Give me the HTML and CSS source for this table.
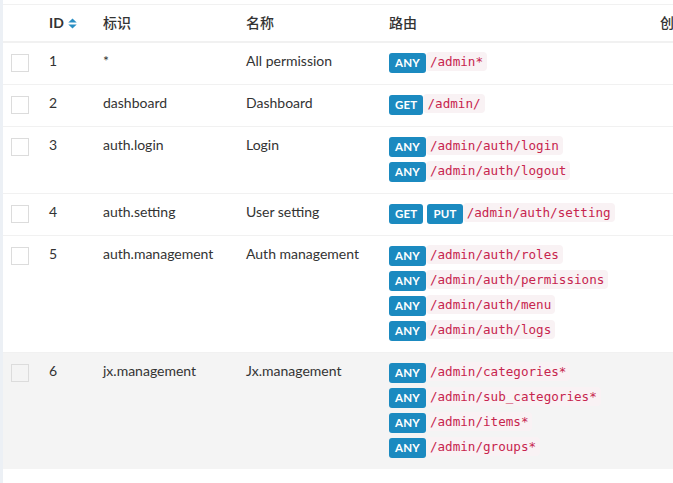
FILE: index.html
```html
<!DOCTYPE html>
<html lang="zh">
<head>
<meta charset="utf-8">
<title>权限</title>
<link rel="stylesheet" href="styles.css">
</head>
<body>
<div class="page">
  <table class="grid">
    <colgroup>
      <col class="c-check"><col class="c-id"><col class="c-slug"><col class="c-name"><col class="c-path"><col class="c-date">
    </colgroup>
    <thead>
      <tr>
        <th></th>
        <th><span class="id-head">ID</span><svg class="sort" width="9" height="11" viewBox="0 0 9 11"><path d="M4.5 0.5 L8.7 4.6 L0.3 4.6 Z" fill="#2a8fc4"/><path d="M4.5 10.5 L8.7 6.4 L0.3 6.4 Z" fill="#2a8fc4"/></svg></th>
        <th>标识</th>
        <th>名称</th>
        <th>路由</th>
        <th>创建时间</th>
      </tr>
    </thead>
    <tbody>
      <tr>
        <td><span class="box"></span></td>
        <td>1</td>
        <td>*</td>
        <td>All permission</td>
        <td><div class="route"><span class="label">ANY</span><code>/admin*</code></div></td>
        <td></td>
      </tr>
      <tr>
        <td><span class="box"></span></td>
        <td>2</td>
        <td>dashboard</td>
        <td>Dashboard</td>
        <td><div class="route"><span class="label">GET</span><code>/admin/</code></div></td>
        <td></td>
      </tr>
      <tr>
        <td><span class="box"></span></td>
        <td>3</td>
        <td>auth.login</td>
        <td>Login</td>
        <td>
          <div class="route"><span class="label">ANY</span><code>/admin/auth/login</code></div>
          <div class="route"><span class="label">ANY</span><code>/admin/auth/logout</code></div>
        </td>
        <td></td>
      </tr>
      <tr>
        <td><span class="box"></span></td>
        <td>4</td>
        <td>auth.setting</td>
        <td>User setting</td>
        <td><div class="route"><span class="label">GET</span><span class="label">PUT</span><code>/admin/auth/setting</code></div></td>
        <td></td>
      </tr>
      <tr>
        <td><span class="box"></span></td>
        <td>5</td>
        <td>auth.management</td>
        <td>Auth management</td>
        <td>
          <div class="route"><span class="label">ANY</span><code>/admin/auth/roles</code></div>
          <div class="route"><span class="label">ANY</span><code>/admin/auth/permissions</code></div>
          <div class="route"><span class="label">ANY</span><code>/admin/auth/menu</code></div>
          <div class="route"><span class="label">ANY</span><code>/admin/auth/logs</code></div>
        </td>
        <td></td>
      </tr>
      <tr class="hover">
        <td><span class="box"></span></td>
        <td>6</td>
        <td>jx.management</td>
        <td>Jx.management</td>
        <td>
          <div class="route"><span class="label">ANY</span><code>/admin/categories*</code></div>
          <div class="route"><span class="label">ANY</span><code>/admin/sub_categories*</code></div>
          <div class="route"><span class="label">ANY</span><code>/admin/items*</code></div>
          <div class="route"><span class="label">ANY</span><code>/admin/groups*</code></div>
        </td>
        <td></td>
      </tr>
    </tbody>
  </table>
</div>
</body>
</html>
```

FILE: styles.css
```css
html, body {
  margin: 0;
  padding: 0;
  background: #ffffff;
  overflow: hidden;
}
body {
  font-family: Lato, "Noto Sans CJK SC", sans-serif;
  font-size: 14px;
  color: #333333;
}
.page {
  border-left: 3px solid #ecf0f5;
  padding-top: 4px;
  min-height: 483px;
  box-sizing: border-box;
  overflow: hidden;
}
.grid {
  border-collapse: collapse;
  table-layout: fixed;
  width: 900px;
  border-top: 1px solid #f1f1f1;
}
.c-check { width: 38px; }
.c-id { width: 54px; }
.c-slug { width: 143px; }
.c-name { width: 143px; }
.c-path { width: 271px; }
.c-date { width: 251px; }
.grid th {
  text-align: left;
  font-weight: 500;
  padding: 8px;
  line-height: 20px;
  border-bottom: 2px solid #f1f1f1;
  white-space: nowrap;
}
.id-head {
  font-weight: 700;
}
.sort {
  margin-left: 4px;
  vertical-align: -1px;
}
.grid td {
  padding: 8px;
  line-height: 20px;
  vertical-align: top;
  border-top: 1px solid #f1f1f1;
  white-space: nowrap;
}
.grid tbody tr:first-child td {
  border-top: 0;
}
.grid tr.hover td {
  background: #f4f4f4;
}
.box {
  display: block;
  width: 16px;
  height: 16px;
  border: 1px solid #dcdcdc;
  margin-top: 3px;
}
.route {
  display: flex;
  align-items: flex-start;
  height: 25px;
}
.label {
  display: inline-block;
  box-sizing: border-box;
  min-width: 34px;
  text-align: center;
  margin-top: 2px;
  height: 20px;
  line-height: 20px;
  padding: 0 6px;
  background: #1b8ac0;
  color: #ffffff;
  font-weight: 700;
  font-size: 11.5px;
  letter-spacing: 0.2px;
  border-radius: 3px;
}
.label + .label {
  margin-left: 4px;
}
code {
  margin-top: 1px;
  height: 19px;
  line-height: 19px;
  padding: 0 4px;
  font-family: "DejaVu Sans Mono", monospace;
  font-size: 12.6px;
  color: #c7254e;
  background: #f9f2f4;
  border-radius: 4px;
}
```
